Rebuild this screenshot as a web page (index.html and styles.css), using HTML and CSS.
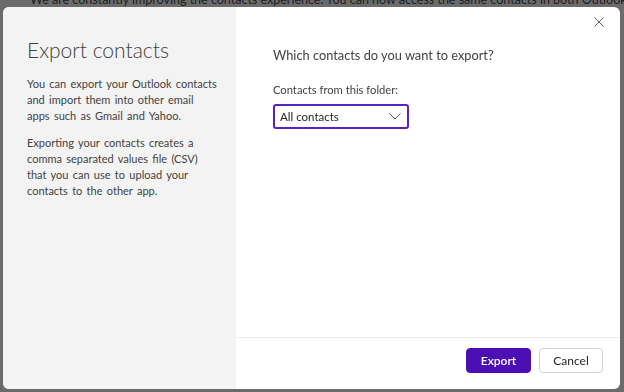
FILE: index.html
```html
<!DOCTYPE html>
<html lang="en">
<head>
  <meta charset="UTF-8">
  <title>Export contacts</title>
  <link rel="stylesheet" href="styles.css">
</head>
<body>
  <div class="banner">
    We are constantly improving the contacts experience. You can now access the same contacts in both Outlook and Teams. <span class="link">Learn more</span>
  </div>

  <div class="dialog">
    <div class="side">
      <h1>Export contacts</h1>
      <p>You can export your Outlook contacts and import them into other email apps such as Gmail and Yahoo.</p>
      <p>Exporting your contacts creates a comma separated values file (CSV) that you can use to upload your contacts to the other app.</p>
    </div>

    <div class="main">
      <button class="close" type="button" aria-label="Close">
        <svg width="10" height="10" viewBox="0 0 10 10"><path d="M0.5 0.5 L9.5 9.5 M9.5 0.5 L0.5 9.5" stroke="#616161" stroke-width="1" fill="none"/></svg>
      </button>
      <div class="content">
        <h2>Which contacts do you want to export?</h2>
        <label class="field-label">Contacts from this folder:</label>
        <div class="select">
          <span>All contacts</span>
          <svg width="12" height="7" viewBox="0 0 12 7"><path d="M0.5 0.5 L6 6 L11.5 0.5" stroke="#616161" stroke-width="1" fill="none"/></svg>
        </div>
      </div>
      <div class="footer">
        <button class="btn primary" type="button">Export</button>
        <button class="btn" type="button">Cancel</button>
      </div>
    </div>
  </div>
</body>
</html>
```

FILE: styles.css
```css
body {
  margin: 0;
  height: 392px;
  overflow: hidden;
  background: #6b6b6b;
  font-family: Lato, "Open Sans", sans-serif;
}

.banner {
  padding: 0 0 0 30px;
  margin-top: -8px;
  font-size: 12.5px;
  line-height: 16px;
  color: #202020;
  white-space: nowrap;
  overflow: hidden;
}

.banner .link {
  color: #3d2a8c;
}

.dialog {
  position: fixed;
  left: 3px;
  top: 7px;
  width: 617px;
  height: 382px;
  display: flex;
  background: #fff;
  border-radius: 6px;
  overflow: hidden;
}

.side {
  width: 192px;
  background: #f3f3f3;
  padding: 28px 17px 0 24px;
  color: #424242;
}

.side h1 {
  margin: 0 0 11px;
  font-size: 21px;
  font-weight: 300;
  line-height: 30px;
  color: #424242;
}

.side p {
  margin: 0 0 11px;
  font-size: 11px;
  line-height: 16px;
  word-spacing: 1.5px;
}

.main {
  flex: 1;
  display: flex;
  flex-direction: column;
  position: relative;
}

.close {
  position: absolute;
  top: 8px;
  right: 15px;
  border: none;
  background: none;
  padding: 0;
  width: 12px;
  height: 12px;
}

.content {
  flex: 1;
  padding: 38px 0 0 37px;
}

.content h2 {
  margin: 0 0 17px;
  font-size: 12.8px;
  font-weight: 400;
  line-height: 20px;
  color: #424242;
}

.field-label {
  display: block;
  font-size: 11.2px;
  line-height: 16px;
  color: #424242;
  margin-bottom: 6px;
}

.select {
  box-sizing: border-box;
  width: 136px;
  height: 25px;
  border: 2px solid #5b21c4;
  border-radius: 3px;
  display: flex;
  align-items: center;
  justify-content: space-between;
  padding: 0 6px 0 5px;
  font-size: 11.5px;
  color: #242424;
}

.footer {
  height: 52px;
  border-top: 1px solid #ebebeb;
  display: flex;
  justify-content: flex-end;
  align-items: flex-start;
  gap: 8px;
  padding: 10px 17px 0 0;
  box-sizing: border-box;
}

.btn {
  width: 64px;
  height: 25px;
  border: 1px solid #d1d1d1;
  border-radius: 4px;
  background: #fff;
  font-family: inherit;
  font-size: 12px;
  color: #242424;
  padding: 0;
}

.btn.primary {
  width: 65px;
  background: #4b0fb3;
  border-color: #4b0fb3;
  color: #fff;
  font-weight: 600;
}
```
